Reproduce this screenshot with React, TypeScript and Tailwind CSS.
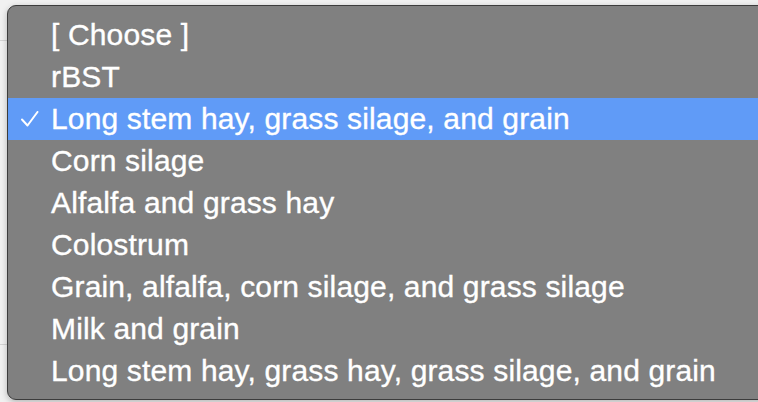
import React from "react";

const items = [
  "[ Choose ]",
  "rBST",
  "Long stem hay, grass silage, and grain",
  "Corn silage",
  "Alfalfa and grass hay",
  "Colostrum",
  "Grain, alfalfa, corn silage, and grass silage",
  "Milk and grain",
  "Long stem hay, grass hay, grass silage, and grain",
];

export default function App() {
  const selected = 2;
  return (
    <div className="relative w-[758px] h-[402px] overflow-hidden bg-[#f1f1f1]" style={{ fontFamily: '"Liberation Sans", Arial, sans-serif' }}>
      <div className="absolute left-0 right-0 top-[40px] h-px bg-[#d4d4d4]" />
      <div className="absolute left-0 right-0 top-[344px] h-px bg-[#d4d4d4]" />
      <div className="relative ml-[7px] mt-[5px] w-[770px] h-[395px] rounded-[9px] border border-[#3c3c3c] bg-[#808080] py-[8px] shadow-[0_2px_6px_rgba(0,0,0,0.25)]">
        {items.map((t, i) => (
          <div
            key={i}
            className={`flex items-center h-[42px] text-[30px] tracking-[0.15px] leading-none text-white [-webkit-text-stroke:0.35px_white] ${i === selected ? "bg-[#609bf7]" : ""}`}
          >
            <span className="w-[43px] h-[42px] flex items-center pl-[13px]">
              {i === selected ? (
                <svg width="18" height="16" viewBox="0 0 18 16" fill="none">
                  <path d="M1 8.5 L6.5 14.5 L16.5 1" stroke="white" strokeWidth="2" strokeLinecap="round" strokeLinejoin="round" />
                </svg>
              ) : null}
            </span>
            <span className="-mt-[1px]">{t}</span>
          </div>
        ))}
      </div>
    </div>
  );
}
